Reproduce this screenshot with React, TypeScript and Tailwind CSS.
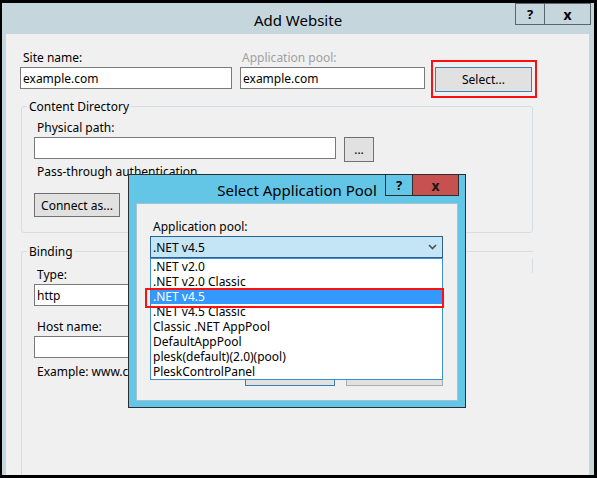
import React from "react";

const poolNames = [
  ".NET v2.0",
  ".NET v2.0 Classic",
  ".NET v4.5",
  ".NET v4.5 Classic",
  "Classic .NET AppPool",
  "DefaultAppPool",
  "plesk(default)(2.0)(pool)",
  "PleskControlPanel",
];

function TextBox({ value, className = "" }: { value?: string; className?: string }) {
  return (
    <div
      className={`flex h-[22px] items-center border border-[#7a7a7a] bg-white px-[2px] whitespace-nowrap overflow-hidden ${className}`}
    >
      {value}
    </div>
  );
}

function Button({
  label,
  className = "",
  primary = false,
}: {
  label: string;
  className?: string;
  primary?: boolean;
}) {
  return (
    <div
      className={`flex items-center justify-center border bg-[#e1e1e1] whitespace-nowrap ${
        primary ? "border-[#3c7fb1]" : "border-[#707070]"
      } ${className}`}
    >
      {label}
    </div>
  );
}

function SelectPoolDialog() {
  return (
    <div className="absolute left-[128px] top-[174px] flex h-[234px] w-[338px] flex-col border border-[#2d2d2d] bg-[#63c6e7]">
      {/* caption */}
      <div className="grid h-[28px] shrink-0 grid-cols-[1fr_auto_1fr]">
        <div />
        <div className="self-center pt-[1px] text-[15px] leading-[18px]">Select Application Pool</div>
        <div className="-mt-[1px] mr-[6px] flex justify-self-end self-start">
          <div className="flex h-[22px] w-[28px] items-center justify-center border border-[#2d2d2d] text-[13px] font-bold">
            ?
          </div>
          <div className="-ml-[1px] flex h-[22px] w-[47px] items-center justify-center border border-[#2d2d2d] bg-[#c75050] text-[14px] font-bold text-[#1a1a1a]">
            x
          </div>
        </div>
      </div>

      <div className="mx-[7px] mb-[6px] flex-1 border border-[#a3c3d3] bg-[#f0f0f0] pl-[13px] pr-[14px] pt-[15px]">
        <div className="mb-[2px] pl-[3px]">Application pool:</div>
        <div className="relative">
          <div className="flex h-[22px] items-center justify-between border border-[#2c628b] bg-[#c4e5f6] pl-[2px] pr-[5px]">
            <span>.NET v4.5</span>
            <svg width="9" height="6" viewBox="0 0 9 6" fill="none">
              <path d="M1 1 L4.5 4.5 L8 1" stroke="#505050" strokeWidth="1.6" />
            </svg>
          </div>

          {/* dropped-down list */}
          <div className="absolute left-0 top-full z-10 w-full border border-[#3b8fd4] bg-white">
            {poolNames.map((name) => (
              <div
                key={name}
                className={`h-[15px] pl-[2px] whitespace-nowrap ${
                  name === ".NET v4.5" ? "bg-[#3399ff] text-white" : ""
                }`}
              >
                {name}
              </div>
            ))}
            <div className="absolute -left-[6px] top-[29px] h-[20px] w-[299px] border-2 border-[#ff1010]" />
          </div>
        </div>

        <div className="mt-[102px] flex justify-end gap-[11px]">
          <Button label="OK" primary className="h-[26px] w-[90px]" />
          <Button label="Cancel" className="h-[26px] w-[97px] border-[#adadad]" />
        </div>
      </div>
    </div>
  );
}

export default function App() {
  return (
    <div className="relative h-[478px] w-[597px] overflow-hidden bg-black pb-[3px] pl-[2px] pr-[3px] pt-[3px] font-['Noto_Sans',sans-serif] text-[12px] leading-[15px] text-black">
      <div className="flex h-full flex-col bg-[#c5d6dd]">
        {/* window caption */}
        <div className="grid h-[31px] shrink-0 grid-cols-[1fr_auto_1fr]">
          <div />
          <div className="self-center pt-[2px] text-[15px] leading-[18px]">Add Website</div>
          <div className="mr-[3px] flex justify-self-end self-start">
            <div className="flex h-[22px] w-[30px] items-center justify-center border border-[#5b666b] text-[13px] font-bold">
              ?
            </div>
            <div className="-ml-[1px] flex h-[22px] w-[47px] items-center justify-center border border-[#5b666b] text-[14px] font-bold">
              x
            </div>
          </div>
        </div>

        {/* window body */}
        <div className="ml-[4px] mr-[5px] flex flex-1 flex-col bg-[#f0f0f0] pl-[14px] pt-[16px]">
          <div className="flex items-start">
            <div className="w-[212px]">
              <div className="mb-[2px] pl-[3px]">Site name:</div>
              <TextBox value="example.com" />
            </div>
            <div className="ml-[8px] w-[185px]">
              <div className="mb-[2px] pl-[2px] text-[#a0a0a0]">Application pool:</div>
              <TextBox value="example.com" className="bg-[#f0f0f0]" />
            </div>
            <div className="relative ml-[10px] mt-[17px]">
              <Button label="Select..." primary className="h-[25px] w-[97px]" />
              <div className="absolute -bottom-[6px] -left-[4px] -right-[5px] -top-[7px] border-2 border-[#ff1010]" />
            </div>
          </div>

          <fieldset className="ml-[1px] mt-[7px] w-[512px] rounded-[3px] border border-[#d5dde2] pb-[15px] pl-[12px]">
            <legend className="-ml-[7px] px-[2px]">Content Directory</legend>
            <div className="mb-[2px] mt-[6px] pl-[3px]">Physical path:</div>
            <div className="flex items-start gap-[8px]">
              <TextBox className="w-[302px]" />
              <Button label="..." className="h-[25px] w-[30px]" />
            </div>
            <div className="mt-[2px] pl-[3px]">Pass-through authentication</div>
            <Button label="Connect as..." className="mt-[14px] h-[24px] w-[86px]" />
          </fieldset>

          <fieldset className="relative ml-[1px] mt-[11px] w-[512px] flex-1 rounded-tl-[3px] border-l border-t border-[#d5dde2] pl-[12px]">
            <legend className="-ml-[7px] px-[2px]">Binding</legend>
            <span className="absolute -top-[1px] right-0 h-[15px] border-r border-[#d5dde2]" />
            <div className="mb-[2px] mt-[8px] pl-[3px]">Type:</div>
            <TextBox value="http" className="w-[200px]" />
            <div className="mb-[2px] mt-[13px] pl-[3px]">Host name:</div>
            <TextBox className="w-[200px]" />
            <div className="mt-[6px] pl-[3px] whitespace-nowrap">
              Example: www.contoso.com or marketing.contoso.com
            </div>
          </fieldset>
        </div>
      </div>

      <SelectPoolDialog />
    </div>
  );
}
